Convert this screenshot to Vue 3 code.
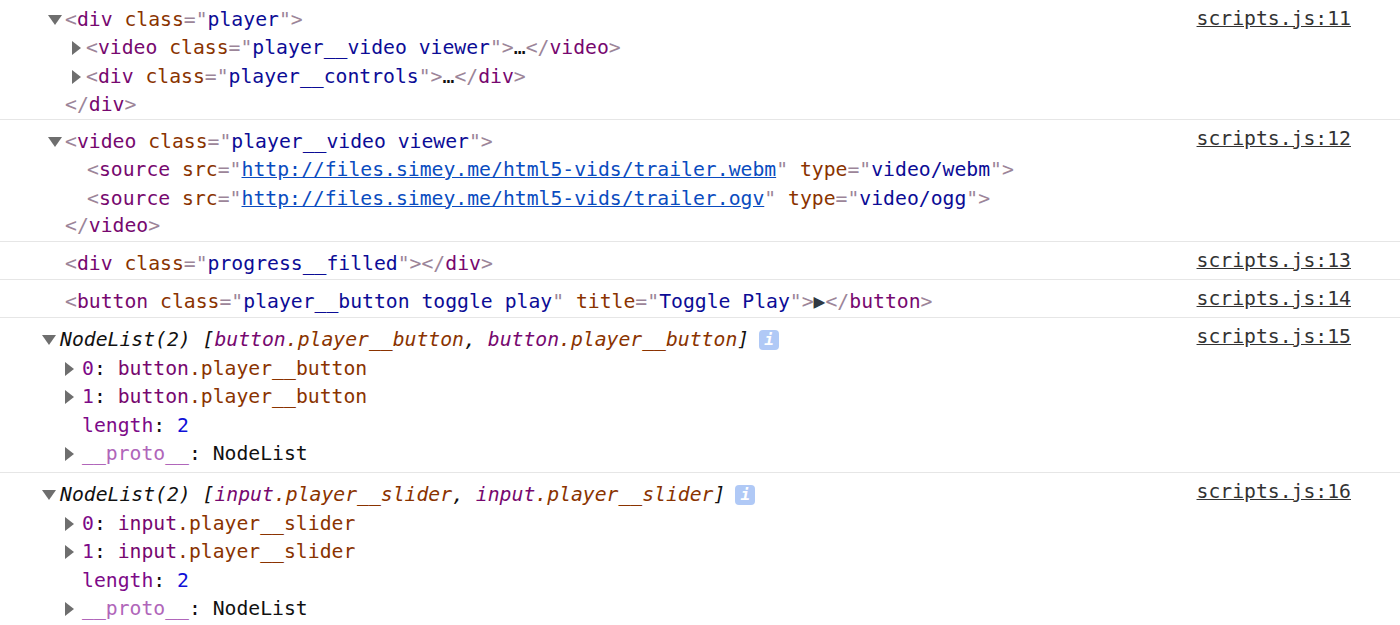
<script setup>
</script>

<template>
  <div class="console">
    <section class="row r1">
      <div class="body">
        <div class="ln l0"><svg class="tri" viewBox="0 0 14 10"><path d="M0 0H14L7 10Z"/></svg><span class="b">&lt;</span><span class="t">div</span> <span class="a">class</span><span class="b">="</span><span class="v">player</span><span class="b">"&gt;</span></div>
        <div class="ln l1"><svg class="tr" viewBox="0 0 9 14"><path d="M0 0L9 7L0 14Z"/></svg><span class="b">&lt;</span><span class="t">video</span> <span class="a">class</span><span class="b">="</span><span class="v">player__video viewer</span><span class="b">"&gt;</span>…<span class="b">&lt;/</span><span class="t">video</span><span class="b">&gt;</span></div>
        <div class="ln l1"><svg class="tr" viewBox="0 0 9 14"><path d="M0 0L9 7L0 14Z"/></svg><span class="b">&lt;</span><span class="t">div</span> <span class="a">class</span><span class="b">="</span><span class="v">player__controls</span><span class="b">"&gt;</span>…<span class="b">&lt;/</span><span class="t">div</span><span class="b">&gt;</span></div>
        <div class="ln close"><span class="b">&lt;/</span><span class="t">div</span><span class="b">&gt;</span></div>
      </div>
      <a class="src first">scripts.js:11</a>
    </section>

    <section class="row r2">
      <div class="body">
        <div class="ln l0"><svg class="tri" viewBox="0 0 14 10"><path d="M0 0H14L7 10Z"/></svg><span class="b">&lt;</span><span class="t">video</span> <span class="a">class</span><span class="b">="</span><span class="v">player__video viewer</span><span class="b">"&gt;</span></div>
        <div class="ln ch"><span class="b">&lt;</span><span class="t">source</span> <span class="a">src</span><span class="b">="</span><span class="u">http://files.simey.me/html5-vids/trailer.webm</span><span class="b">"</span> <span class="a">type</span><span class="b">="</span><span class="v">video/webm</span><span class="b">"&gt;</span></div>
        <div class="ln ch"><span class="b">&lt;</span><span class="t">source</span> <span class="a">src</span><span class="b">="</span><span class="u">http://files.simey.me/html5-vids/trailer.ogv</span><span class="b">"</span> <span class="a">type</span><span class="b">="</span><span class="v">video/ogg</span><span class="b">"&gt;</span></div>
        <div class="ln close last"><span class="b">&lt;/</span><span class="t">video</span><span class="b">&gt;</span></div>
      </div>
      <a class="src">scripts.js:12</a>
    </section>

    <section class="row r3">
      <div class="body">
        <div class="ln close"><span class="b">&lt;</span><span class="t">div</span> <span class="a">class</span><span class="b">="</span><span class="v">progress__filled</span><span class="b">"&gt;&lt;/</span><span class="t">div</span><span class="b">&gt;</span></div>
      </div>
      <a class="src">scripts.js:13</a>
    </section>

    <section class="row r3">
      <div class="body">
        <div class="ln close"><span class="b">&lt;</span><span class="t">button</span> <span class="a">class</span><span class="b">="</span><span class="v">player__button toggle play</span><span class="b">"</span> <span class="a">title</span><span class="b">="</span><span class="v">Toggle Play</span><span class="b">"&gt;</span><span class="play">▶</span><span class="b">&lt;/</span><span class="t">button</span><span class="b">&gt;</span></div>
      </div>
      <a class="src">scripts.js:14</a>
    </section>

    <section class="row r5">
      <div class="body">
        <div class="ln n0"><svg class="tri" viewBox="0 0 14 10"><path d="M0 0H14L7 10Z"/></svg><i>NodeList(2) [<span class="t">button</span><span class="a">.player__button</span>, <span class="t">button</span><span class="a">.player__button</span>]</i><span class="info">i</span></div>
        <div class="ln n1"><svg class="tr" viewBox="0 0 9 14"><path d="M0 0L9 7L0 14Z"/></svg><span class="k">0</span>: <span class="t">button</span><span class="a">.player__button</span></div>
        <div class="ln n1"><svg class="tr" viewBox="0 0 9 14"><path d="M0 0L9 7L0 14Z"/></svg><span class="k">1</span>: <span class="t">button</span><span class="a">.player__button</span></div>
        <div class="ln n2"><span class="k">length</span>: <span class="num">2</span></div>
        <div class="ln n1"><svg class="tr" viewBox="0 0 9 14"><path d="M0 0L9 7L0 14Z"/></svg><span class="p">__proto__</span>: NodeList</div>
      </div>
      <a class="src">scripts.js:15</a>
    </section>

    <section class="row r5">
      <div class="body">
        <div class="ln n0"><svg class="tri" viewBox="0 0 14 10"><path d="M0 0H14L7 10Z"/></svg><i>NodeList(2) [<span class="t">input</span><span class="a">.player__slider</span>, <span class="t">input</span><span class="a">.player__slider</span>]</i><span class="info">i</span></div>
        <div class="ln n1"><svg class="tr" viewBox="0 0 9 14"><path d="M0 0L9 7L0 14Z"/></svg><span class="k">0</span>: <span class="t">input</span><span class="a">.player__slider</span></div>
        <div class="ln n1"><svg class="tr" viewBox="0 0 9 14"><path d="M0 0L9 7L0 14Z"/></svg><span class="k">1</span>: <span class="t">input</span><span class="a">.player__slider</span></div>
        <div class="ln n2"><span class="k">length</span>: <span class="num">2</span></div>
        <div class="ln n1"><svg class="tr" viewBox="0 0 9 14"><path d="M0 0L9 7L0 14Z"/></svg><span class="p">__proto__</span>: NodeList</div>
      </div>
      <a class="src">scripts.js:16</a>
    </section>
  </div>
</template>

<style scoped>
.console {
  width: 1400px;
  font-family: "DejaVu Sans Mono", monospace;
  font-size: 19.74px;
  line-height: 28.5px;
  color: #111;
  background: #fff;
}
.row {
  display: flex;
  justify-content: space-between;
  padding-right: 49px;
  border-bottom: 1px solid #e6e6e6;
  box-sizing: border-box;
}
.r1 { height: 120px; padding-top: 5.6px; }
.r2 { height: 122px; padding-top: 7.5px; }
.r3 { height: 38px; padding-top: 8px; }
.r5 { height: 155px; padding-top: 8px; }
.body { min-width: 0; }
.ln { white-space: pre; height: 28.5px; }
.last { margin-top: -1.5px; }
.l0 { padding-left: 48px; }
.l1 { padding-left: 72px; }
.ch { padding-left: 87px; }
.close { padding-left: 65px; }
.n0 { padding-left: 42px; }
.n1 { padding-left: 65px; }
.n2 { padding-left: 82px; }
.tri { width: 14px; height: 10px; margin-right: 3px; vertical-align: 1px; fill: #6e6e6e; }
.n0 .tri { margin-right: 4px; }
.tr { width: 9px; height: 14px; margin-right: 5px; vertical-align: -1px; fill: #6e6e6e; }
.n1 .tr { margin-right: 8px; }
.b { color: #9c8599; }
.t { color: #77086f; }
.a { color: #8a3300; }
.v { color: #0c0c96; }
.u { color: #0a4cc0; text-decoration: underline; }
.k { color: #7d0a88; }
.num { color: #1010d8; }
.p { color: #b066ba; }
.play { color: #303942; }
.info {
  display: inline-block;
  width: 20px;
  height: 20px;
  margin-left: 10px;
  border-radius: 4px;
  background: #b0c9f6;
  color: #fff;
  font-style: italic;
  font-weight: 700;
  font-size: 16px;
  line-height: 20px;
  text-align: center;
  vertical-align: 1px;
}
.src {
  color: #333;
  text-decoration: underline;
  height: 28.5px;
  margin-top: -3px;
}
.r1 .src { margin-top: -1px; }
.r2 .src { margin-top: -2.5px; }
</style>
